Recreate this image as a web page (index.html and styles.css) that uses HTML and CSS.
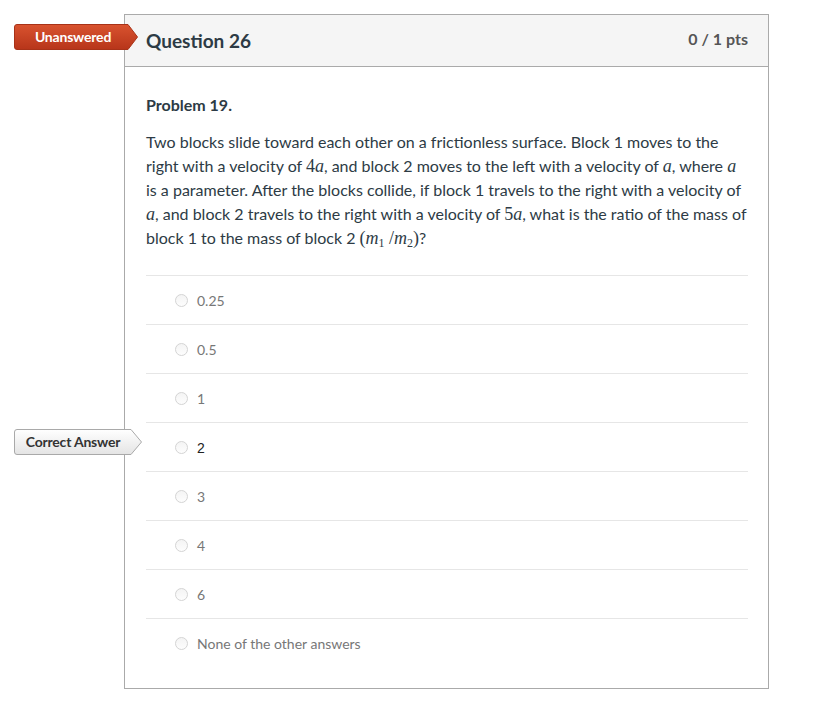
FILE: index.html
```html
<!DOCTYPE html>
<html lang="en">
<head>
    <meta charset="UTF-8">
    <title>Question 26</title>
    <link rel="stylesheet" href="styles.css">
</head>
<body>
    <div class="question">
        <div class="question-header">
            <div class="badge badge-unanswered">
                <svg width="124" height="26" viewBox="0 0 124 26">
                    <defs>
                        <linearGradient id="red" x1="0" y1="0" x2="0" y2="1">
                            <stop offset="0" stop-color="#d9532f"/>
                            <stop offset="1" stop-color="#b7351a"/>
                        </linearGradient>
                    </defs>
                    <path d="M3,0.5 H114 L123.5,13 L114,25.5 H3 Q0.5,25.5 0.5,23 V3 Q0.5,0.5 3,0.5 Z" fill="url(#red)" stroke="#a83218"/>
                </svg>
                <span class="badge-text">Unanswered</span>
            </div>
            <span class="question-name">Question 26</span>
            <span class="question-points">0 / 1 pts</span>
        </div>

        <div class="question-body">
            <p class="problem-title">Problem 19.</p>
            <p class="problem-text">
                Two blocks slide toward each other on a frictionless surface. Block 1 moves to the
                right with a velocity of <span class="math">4<i>a</i></span>, and block 2 moves to the left with a velocity of <span class="math"><i>a</i></span>, where <span class="math"><i>a</i></span>
                is a parameter. After the blocks collide, if block 1 travels to the right with a velocity of
                <span class="math"><i>a</i></span>, and block 2 travels to the right with a velocity of <span class="math">5<i>a</i></span>, what is the ratio of the mass of
                block 1 to the mass of block 2 <span class="math">(<i>m</i><sub>1</sub> /<i>m</i><sub>2</sub>)</span>?
            </p>

            <div class="answers">
                <div class="answer"><span class="radio"></span><span class="answer-text">0.25</span></div>
                <div class="answer"><span class="radio"></span><span class="answer-text">0.5</span></div>
                <div class="answer"><span class="radio"></span><span class="answer-text">1</span></div>
                <div class="answer correct">
                    <div class="badge badge-correct">
                        <svg width="128" height="26" viewBox="0 0 128 26">
                            <defs>
                                <linearGradient id="grey" x1="0" y1="0" x2="0" y2="1">
                                    <stop offset="0" stop-color="#ffffff"/>
                                    <stop offset="1" stop-color="#e4e4e4"/>
                                </linearGradient>
                            </defs>
                            <path d="M3,0.5 H117 L127.5,13 L117,25.5 H3 Q0.5,25.5 0.5,23 V3 Q0.5,0.5 3,0.5 Z" fill="url(#grey)" stroke="#a9a9a9"/>
                        </svg>
                        <span class="badge-text">Correct Answer</span>
                    </div>
                    <span class="radio"></span><span class="answer-text">2</span>
                </div>
                <div class="answer"><span class="radio"></span><span class="answer-text">3</span></div>
                <div class="answer"><span class="radio"></span><span class="answer-text">4</span></div>
                <div class="answer"><span class="radio"></span><span class="answer-text">6</span></div>
                <div class="answer"><span class="radio"></span><span class="answer-text">None of the other answers</span></div>
            </div>
        </div>
    </div>
</body>
</html>
```

FILE: styles.css
```css
body {
    margin: 0;
    padding: 14px 0 20px 124px;
    font-family: Lato, "Liberation Sans", sans-serif;
    color: #2d3b45;
    background: #fff;
}

.question {
    width: 643px;
    border: 1px solid #aaa;
}

.question-header {
    position: relative;
    display: flex;
    align-items: center;
    justify-content: space-between;
    height: 51px;
    padding: 0 20px 0 21px;
    background: #f5f5f5;
    border-bottom: 1px solid #aaa;
}

.question-name {
    font-size: 19px;
    font-weight: bold;
    margin-top: -1px;
}

.question-points {
    font-size: 16px;
    font-weight: bold;
    color: #555;
    margin-top: -5px;
}

.badge {
    position: absolute;
    height: 26px;
    display: flex;
    align-items: center;
}

.badge svg {
    position: absolute;
    left: 0;
    top: 0;
}

.badge-text {
    position: relative;
    font-size: 14px;
    font-weight: bold;
    letter-spacing: -0.2px;
    margin-top: -1px;
}

.badge-unanswered {
    left: -111px;
    top: 9px;
    width: 118px;
    justify-content: center;
    color: #fff;
}

.badge-correct {
    left: -132px;
    top: 6px;
    width: 118px;
    justify-content: center;
    color: #333;
}

.question-body {
    padding: 26px 20px 21px 21px;
}

.problem-title {
    margin: 0 0 13px;
    font-size: 16px;
    font-weight: bold;
    line-height: 24px;
}

.problem-text {
    margin: 0 0 25px;
    font-size: 16px;
    line-height: 24px;
}

.math {
    font-family: "Liberation Serif", "DejaVu Serif", serif;
    font-size: 18px;
    line-height: 1;
}

.math sub {
    font-size: 12px;
    line-height: 1;
    vertical-align: -3px;
}

.answers {
    border-top: 1px solid #e6e6e6;
}

.answer {
    position: relative;
    display: flex;
    align-items: center;
    height: 48px;
    padding-left: 29px;
    border-bottom: 1px solid #e6e6e6;
}

.answer:last-child {
    border-bottom: none;
}

.radio {
    width: 11px;
    height: 11px;
    border: 1px solid #d4d4d4;
    border-radius: 50%;
    background: linear-gradient(#f4f4f4, #fdfdfd);
    margin-right: 9px;
}

.answer-text {
    font-size: 14px;
    color: #777;
    margin-top: 1px;
}

.correct .answer-text {
    font-family: "Liberation Sans", Arial, sans-serif;
    color: #222;
}
```
